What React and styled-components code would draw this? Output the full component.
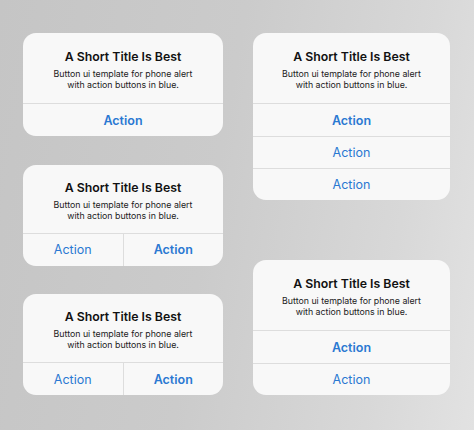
import styled, { createGlobalStyle } from 'styled-components';

const Global = createGlobalStyle`
  body {
    margin: 0;
    font-family: Inter, "Noto Sans", sans-serif;
  }
`;

const Page = styled.div`
  width: 474px;
  height: 430px;
  box-sizing: border-box;
  padding: 33px 0 0 23px;
  display: flex;
  gap: 30px;
  background: linear-gradient(100deg, #c5c5c5 0%, #cbcbcb 45%, #d8d8d8 80%, #e2e2e2 100%);
  overflow: hidden;
`;

const Column = styled.div`
  width: ${(props) => props.width}px;
  height: 362px;
  display: flex;
  flex-direction: column;
  justify-content: space-between;
`;

const Card = styled.div`
  background: #f8f8f8;
  border-radius: 13px;
  overflow: hidden;
  display: flex;
  flex-direction: column;
`;

const Header = styled.div`
  padding: ${(props) => props.pad || '15px 8px 13px'};
  text-align: center;
  border-bottom: 1px solid #dddddd;
`;

const Title = styled.div`
  font-size: 12.3px;
  font-weight: 600;
  line-height: 18px;
  color: #111;
  margin-bottom: 2px;
`;

const Body = styled.div`
  font-size: 8.8px;
  line-height: 11px;
  color: #222;
`;

const Row = styled.div`
  display: flex;
  height: 32px;
  box-sizing: border-box;
  & + & {
    border-top: 1px solid #dddddd;
  }
`;

const Action = styled.div`
  flex: 1;
  display: flex;
  align-items: center;
  justify-content: center;
  font-size: 12.5px;
  color: #2a78d2;
  font-weight: ${(props) => (props.bold ? 600 : 400)};
  & + & {
    border-left: 1px solid #dddddd;
  }
`;

const Alert = ({ rows, pad }) => (
  <Card>
    <Header pad={pad}>
      <Title>A Short Title Is Best</Title>
      <Body>
        Button ui template for phone alert
        <br />
        with action buttons in blue.
      </Body>
    </Header>
    {rows.map((row, i) => (
      <Row key={i}>
        {row.map((bold, j) => (
          <Action key={j} bold={bold}>Action</Action>
        ))}
      </Row>
    ))}
  </Card>
);

const App = () => (
  <>
    <Global />
    <Page>
      <Column width={200}>
        <Alert rows={[[true]]} />
        <Alert rows={[[false, true]]} pad="14px 8px 12px" />
        <Alert rows={[[false, true]]} pad="14px 8px 12px" />
      </Column>
      <Column width={197}>
        <Alert rows={[[true], [false], [false]]} />
        <Alert rows={[[true], [false]]} />
      </Column>
    </Page>
  </>
);

export default App;
